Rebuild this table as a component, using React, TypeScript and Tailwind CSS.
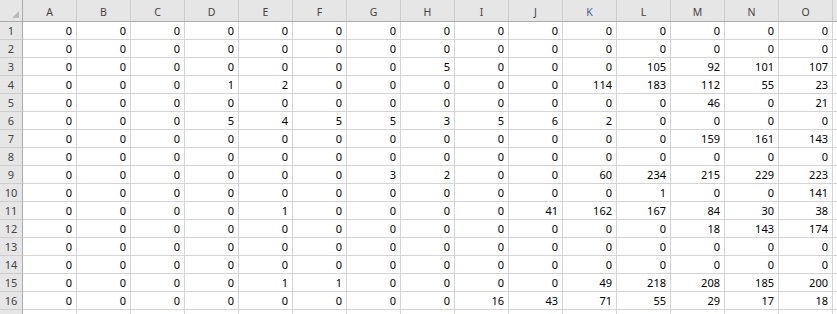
const cols = ["A", "B", "C", "D", "E", "F", "G", "H", "I", "J", "K", "L", "M", "N", "O", "P"];

// rows 1-16, columns A-O
const data: number[][] = [
  [0, 0, 0, 0, 0, 0, 0, 0, 0, 0, 0, 0, 0, 0, 0],
  [0, 0, 0, 0, 0, 0, 0, 0, 0, 0, 0, 0, 0, 0, 0],
  [0, 0, 0, 0, 0, 0, 0, 5, 0, 0, 0, 105, 92, 101, 107],
  [0, 0, 0, 1, 2, 0, 0, 0, 0, 0, 114, 183, 112, 55, 23],
  [0, 0, 0, 0, 0, 0, 0, 0, 0, 0, 0, 0, 46, 0, 21],
  [0, 0, 0, 5, 4, 5, 5, 3, 5, 6, 2, 0, 0, 0, 0],
  [0, 0, 0, 0, 0, 0, 0, 0, 0, 0, 0, 0, 159, 161, 143],
  [0, 0, 0, 0, 0, 0, 0, 0, 0, 0, 0, 0, 0, 0, 0],
  [0, 0, 0, 0, 0, 0, 3, 2, 0, 0, 60, 234, 215, 229, 223],
  [0, 0, 0, 0, 0, 0, 0, 0, 0, 0, 0, 1, 0, 0, 141],
  [0, 0, 0, 0, 1, 0, 0, 0, 0, 41, 162, 167, 84, 30, 38],
  [0, 0, 0, 0, 0, 0, 0, 0, 0, 0, 0, 0, 18, 143, 174],
  [0, 0, 0, 0, 0, 0, 0, 0, 0, 0, 0, 0, 0, 0, 0],
  [0, 0, 0, 0, 0, 0, 0, 0, 0, 0, 0, 0, 0, 0, 0],
  [0, 0, 0, 0, 1, 1, 0, 0, 0, 0, 49, 218, 208, 185, 200],
  [0, 0, 0, 0, 0, 0, 0, 0, 16, 43, 71, 55, 29, 17, 18],
];

export default function App() {
  return (
    <div
      className="w-[837px] h-[314px] overflow-hidden bg-white text-[11px] text-black"
      style={{ fontFamily: '"Noto Sans", "Open Sans", sans-serif' }}
    >
      {/* Column header row */}
      <div className="flex h-[22px] w-max bg-[#e6e6e6] border-b border-[#ababab]">
        <div className="w-[23px] shrink-0 border-r border-[#ababab] flex items-end justify-end pr-[3px] pb-[3px]">
          <svg width="7" height="7" viewBox="0 0 7 7">
            <polygon points="7,0 7,7 0,7" fill="#b9b9b9" />
          </svg>
        </div>
        {cols.map((c) => (
          <div
            key={c}
            className={`w-[54px] shrink-0 border-r border-[#cdcdcd] text-center text-[10.5px] leading-[16px] pt-[4px] ${
              c === "K" ? "text-[#3c5fa8]" : "text-[#444444]"
            }`}
          >
            {/* column P is cut off at the window edge */}
            {c === "P" ? "" : c}
          </div>
        ))}
      </div>

      {/* Data rows (row 17 only peeks in at the bottom) */}
      {[...data, null].map((row, i) => (
        <div key={i} className="flex h-[18px] w-max">
          <div className="w-[23px] shrink-0 bg-[#e6e6e6] border-r border-b border-r-[#ababab] border-b-[#cdcdcd] text-center text-[#444444] leading-[17px]">
            {row ? i + 1 : ""}
          </div>
          {cols.map((c, j) => (
            <div
              key={c}
              className="w-[54px] shrink-0 border-r border-b border-[#d4d4d4] text-right pr-[4px] leading-[17px]"
            >
              {row && j < 15 ? row[j] : ""}
            </div>
          ))}
        </div>
      ))}
    </div>
  );
}
